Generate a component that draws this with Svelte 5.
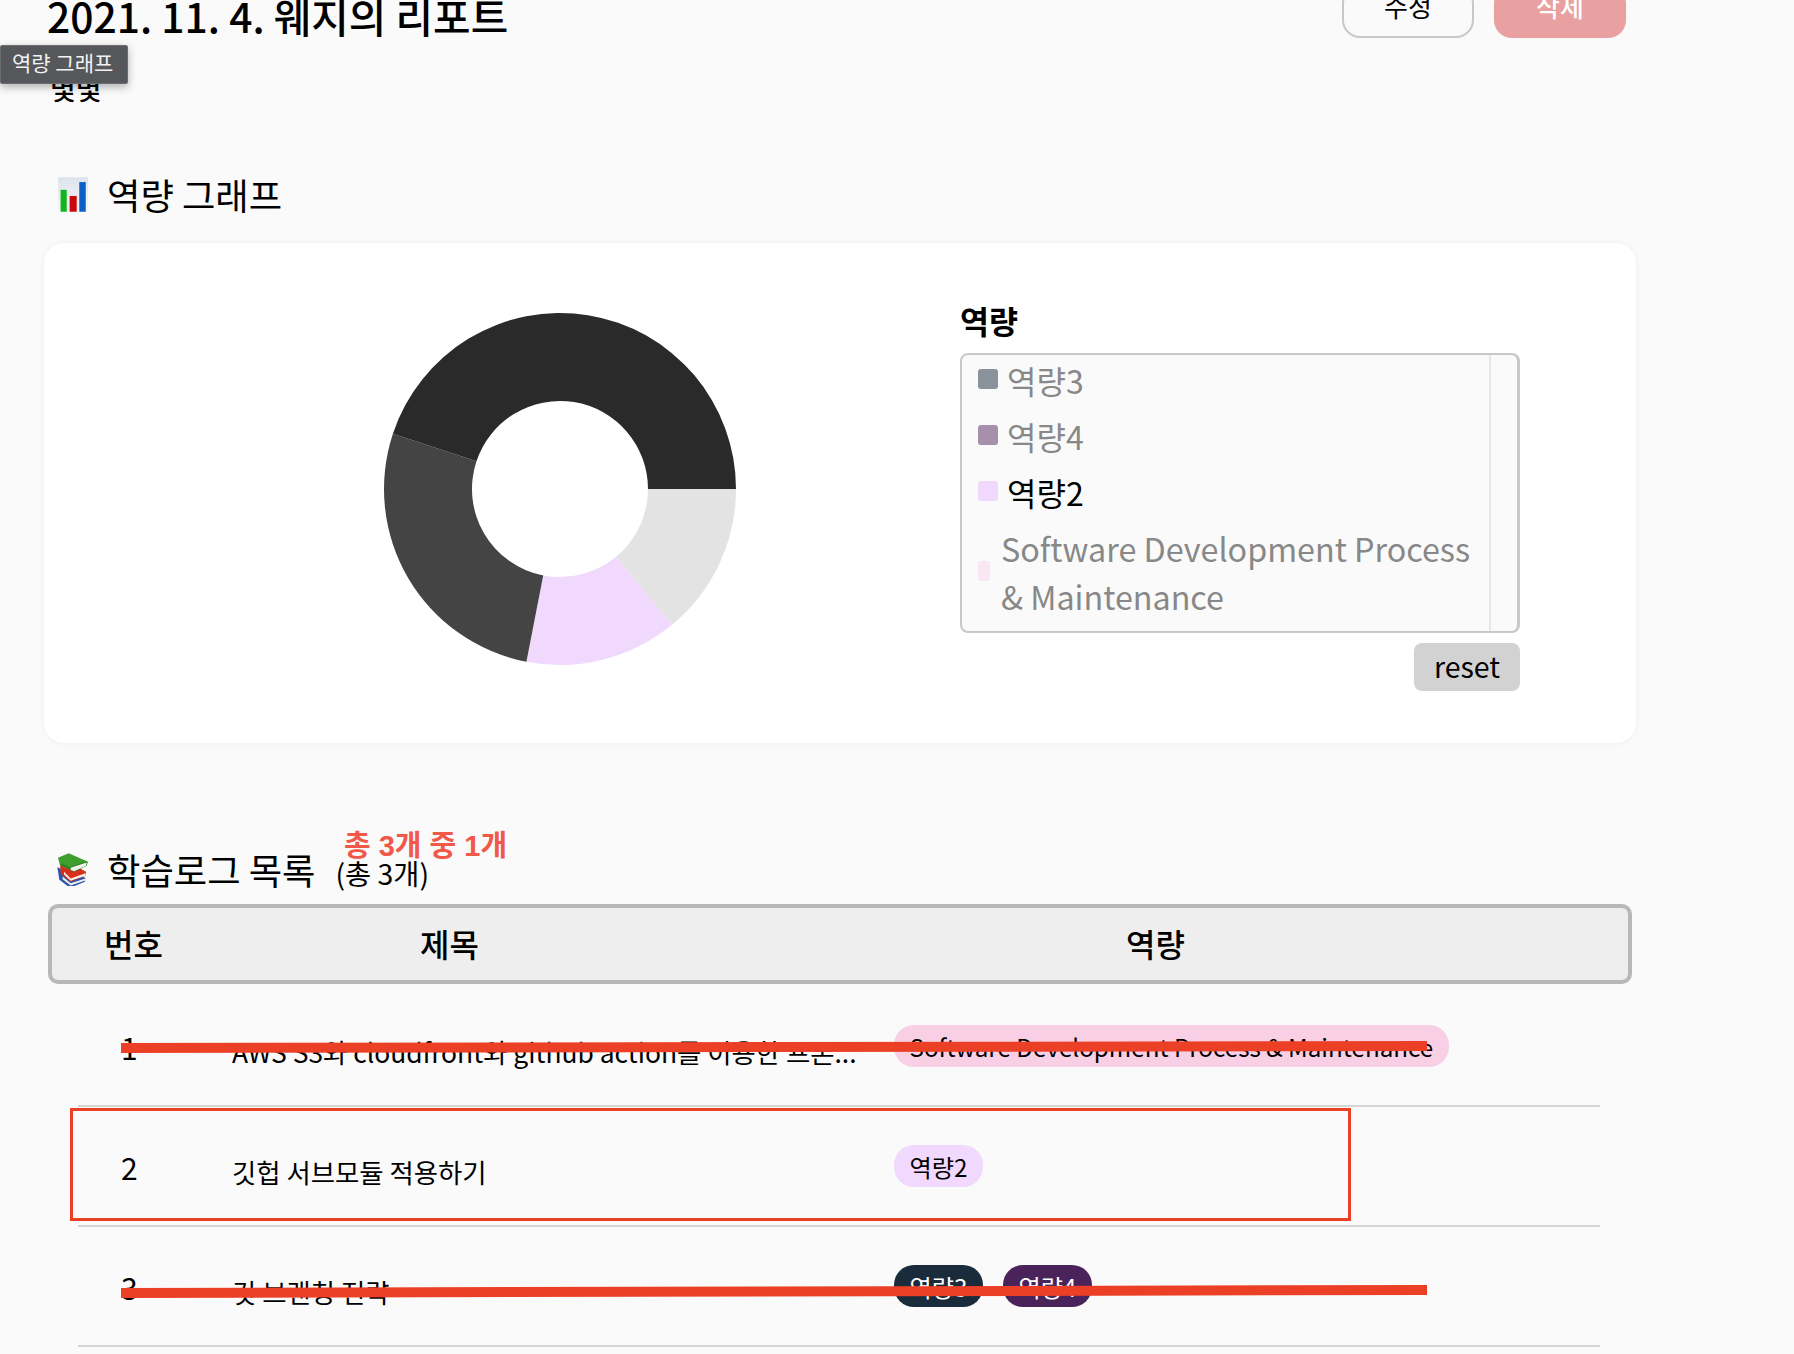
<script lang="ts">
  const R = 176, r = 88, cx = 180, cy = 180;

  function slicePath(from: number, to: number) {
    const p = (rad: number, deg: number) => {
      const a = (deg * Math.PI) / 180;
      return `${(cx + rad * Math.cos(a)).toFixed(2)} ${(cy + rad * Math.sin(a)).toFixed(2)}`;
    };
    const large = to - from > 180 ? 1 : 0;
    return `M${p(R, from)} A${R} ${R} 0 ${large} 1 ${p(R, to)} L${p(r, to)} A${r} ${r} 0 ${large} 0 ${p(r, from)} Z`;
  }

  const slices = [
    { from: 0, to: 50.4, color: '#e3e3e3' },
    { from: 50.4, to: 101, color: '#f0d9fc' },
    { from: 101, to: 198.3, color: '#444444' },
    { from: 198.3, to: 360, color: '#2a2a2a' },
  ];

  const legend = [
    { label: '역량3', color: '#8a929c', active: false },
    { label: '역량4', color: '#a58fab', active: false },
    { label: '역량2', color: '#f0d9fc', active: true },
    { label: 'Software Development Process & Maintenance', color: '#fbe7f3', active: false, long: true },
  ];

  const rows = [
    { no: 1, title: 'AWS S3와 cloudfront와 github action를 이용한 프론...', tags: [{ label: 'Software Development Process & Maintenance', cls: 'pink' }] },
    { no: 2, title: '깃헙 서브모듈 적용하기', tags: [{ label: '역량2', cls: 'lilac' }] },
    { no: 3, title: '깃 브랜칭 전략', tags: [{ label: '역량3', cls: 'navy' }, { label: '역량4', cls: 'plum' }] },
  ];
</script>

<main class="page">
  <header class="top">
    <h1>2021. 11. 4. 웨지의 리포트</h1>
    <div class="actions">
      <button class="btn edit">수정</button>
      <button class="btn del">삭제</button>
    </div>
  </header>
  <p class="desc">몇몇</p>

  <h2 class="section first">
    <svg class="emoji" viewBox="22 18 93 107">
      <defs>
        <linearGradient id="chartbg" x1="0" y1="0" x2="0" y2="1">
          <stop offset="0" stop-color="#dde4ec" />
          <stop offset="1" stop-color="#f5f7f9" />
        </linearGradient>
      </defs>
      <rect x="22" y="18" width="93" height="107" fill="url(#chartbg)" />
      <rect x="30" y="57" width="19" height="68" fill="#12b51c" />
      <rect x="58" y="76" width="22" height="49" fill="#c80a0a" />
      <rect x="88" y="33" width="20" height="92" fill="#0c5fc4" />
    </svg>
    역량 그래프
  </h2>

  <section class="card">
    <div class="chart">
      <svg width="360" height="360" viewBox="0 0 360 360">
        {#each slices as s}
          <path d={slicePath(s.from, s.to)} fill={s.color} />
        {/each}
      </svg>
    </div>
    <div class="filter">
      <h3>역량</h3>
      <div class="listbox">
        <ul>
          {#each legend as item}
            <li class:active={item.active} class:long={item.long}>
              <span class="swatch" style="background: {item.color}"></span>
              <span>{item.label}</span>
            </li>
          {/each}
        </ul>
        <div class="track"></div>
      </div>
      <button class="reset">reset</button>
    </div>
  </section>

  <h2 class="section second">
    <svg class="emoji book" viewBox="21 15 96 96">
      <polygon points="22,56 60,72 106,88 105,100 60,118 28,94" fill="#2f55ab" />
      <polygon points="38,84 62,104 106,90 106,96 62,111 38,92" fill="#efeee8" />
      <polygon points="30,44 52,38 108,70 106,82 62,100 32,76" fill="#d6301c" />
      <polygon points="42,70 62,90 106,74 106,82 62,97 42,78" fill="#f5f1e6" />
      <polygon points="24,28 56,14 114,40 110,50 72,70 30,50" fill="#3f9f2e" />
      <polygon points="34,44 60,56 72,52 110,38 112,42 110,52 72,70 60,64 34,50" fill="#2c7f20" />
      <polygon points="62,58 110,42 108,52 72,68 62,64" fill="#f4f4ee" />
    </svg>
    학습로그 목록
    <small>(총 3개)</small>
  </h2>

  <div class="thead">
    <span>번호</span>
    <span>제목</span>
    <span>역량</span>
  </div>

  {#each rows as row}
    <div class="row">
      <span class="num">{row.no}</span>
      <span class="title">{row.title}</span>
      <div class="tags">
        {#each row.tags as tag}
          <span class="tag {tag.cls}">{tag.label}</span>
        {/each}
      </div>
    </div>
  {/each}
</main>

<div class="tooltip">역량 그래프</div>
<div class="note">총 3개 중 1개</div>

<svg class="marks" width="1794" height="1354">
  <polygon points="121,1043 1427,1041 1427,1051 121,1053" fill="#ec4026" />
  <polygon points="121,1288 1427,1285 1427,1295 121,1298" fill="#ec4026" />
  <rect x="71.5" y="1109.5" width="1278" height="110" fill="none" stroke="#ec4026" stroke-width="3" />
</svg>

<style>
  :global(body) {
    margin: 0;
    height: 1354px;
    overflow: hidden;
    background: #fafafa;
    font-family: "Noto Sans CJK KR", "Noto Sans", sans-serif;
    color: #000;
  }

  .page {
    width: 1592px;
    margin: -13px 0 0 44px;
  }

  .top {
    display: flex;
    justify-content: space-between;
    align-items: flex-start;
    padding-right: 10px;
  }

  h1 {
    margin: 0 0 0 3px;
    font-size: 40.8px;
    font-weight: 500;
    line-height: 58px;
  }

  .actions {
    display: flex;
    gap: 20px;
    margin-top: -1px;
  }

  .btn {
    width: 132px;
    height: 52px;
    border-radius: 18px;
    font-family: inherit;
    font-size: 26px;
    padding: 0 0 12px;
    line-height: 1;
    box-sizing: border-box;
  }

  .edit {
    background: transparent;
    border: 2px solid #c8c8c8;
  }

  .del {
    background: #e8a0a0;
    border: 0;
    color: #fff;
    font-weight: 500;
  }

  .desc {
    margin: 25px 0 0 6px;
    font-size: 28px;
    line-height: 36px;
    font-weight: 500;
  }

  .section {
    display: flex;
    align-items: center;
    margin: 0;
    font-size: 36.3px;
    font-weight: 400;
    line-height: 52px;
  }

  .section.first {
    margin-top: 62px;
    margin-left: 14px;
  }

  .section.second {
    margin-top: 100px;
    margin-left: 13px;
  }

  .emoji {
    width: 30px;
    height: 35px;
    margin-right: 19px;
  }

  .emoji.book {
    width: 32px;
    height: 33px;
    margin-right: 18px;
  }

  .section small {
    font-size: 28.4px;
    line-height: 40px;
    margin: 7px 0 0 20px;
  }

  .card {
    display: flex;
    box-sizing: border-box;
    height: 500px;
    margin-top: 23px;
    background: #fff;
    border-radius: 20px;
    box-shadow: 0 0 6px rgba(0, 0, 0, 0.06);
  }

  .chart {
    width: 696px;
    padding: 66px 0 0 336px;
    box-sizing: border-box;
  }

  .filter {
    width: 560px;
    margin-left: 220px;
    padding-top: 56px;
    display: flex;
    flex-direction: column;
    align-items: flex-start;
  }

  h3 {
    margin: 0;
    font-size: 31.5px;
    font-weight: 700;
    line-height: 42px;
  }

  .listbox {
    display: flex;
    box-sizing: border-box;
    width: 560px;
    height: 280px;
    margin-top: 12px;
    background: #fafafa;
    border: 2px solid #c8c8c8;
    border-right-width: 3px;
    border-radius: 8px;
  }

  ul {
    flex: 1;
    list-style: none;
    margin: 0;
    padding: 0 0 0 16px;
  }

  li {
    display: flex;
    align-items: center;
    gap: 9px;
    min-height: 56px;
    font-size: 32px;
    line-height: 48px;
    color: #888;
  }

  li:first-child {
    margin-top: -3px;
  }

  li.active {
    color: #000;
  }

  li.long {
    padding-top: 4px;
    gap: 11px;
    font-size: 32.3px;
  }

  li.long span:last-child {
    width: 488px;
    flex-shrink: 0;
  }

  .swatch {
    flex: 0 1 20px;
    min-width: 12px;
    height: 20px;
    margin-bottom: 2px;
    border-radius: 3px;
  }

  .track {
    width: 26px;
    border-left: 2px solid #e8e8e8;
  }

  .reset {
    align-self: flex-end;
    width: 106px;
    height: 48px;
    margin-top: 10px;
    background: #d2d2d2;
    border: 0;
    border-radius: 8px;
    font-family: inherit;
    font-size: 28.5px;
    padding: 0 0 4px;
  }

  .thead {
    display: grid;
    grid-template-columns: 316px 706px 1fr;
    box-sizing: border-box;
    width: 1584px;
    height: 80px;
    margin: 9px 0 0 4px;
    padding: 0 0 2px 52px;
    align-items: center;
    background: #eee;
    border: 4px solid #b8b8b8;
    border-radius: 10px;
    font-size: 32px;
    font-weight: 500;
  }

  .row {
    display: grid;
    grid-template-columns: 110px 662px 1fr;
    align-items: center;
    box-sizing: border-box;
    height: 120px;
    width: 1522px;
    margin-left: 34px;
    padding: 2px 0 0 43px;
    border-bottom: 2px solid #d5d5d5;
  }

  .thead + .row {
    margin-top: 3px;
  }

  .num {
    font-size: 30px;
  }

  .title {
    font-size: 26.4px;
    padding-top: 8px;
    margin-left: 1px;
  }

  .tags {
    display: flex;
    gap: 20px;
    margin-top: -2px;
    margin-left: 1px;
  }

  .tag {
    height: 42px;
    padding: 0 15.5px;
    border-radius: 20px;
    font-size: 24.2px;
    line-height: 44px;
  }

  .pink { background: #f8cfe5; }
  .lilac { background: #f0d9fc; }
  .navy { background: #1a2b3c; color: #fff; }
  .plum { background: #4a235a; color: #fff; }

  .tooltip {
    position: absolute;
    left: 0;
    top: 45px;
    box-sizing: border-box;
    width: 128px;
    height: 39px;
    padding-left: 11px;
    background: #55575a;
    border: 1px solid #6a6c6f;
    border-radius: 2px;
    color: #f2f2f2;
    font-size: 21px;
    line-height: 32px;
    box-shadow: 0 3px 8px rgba(0, 0, 0, 0.3);
  }

  .note {
    position: absolute;
    left: 344px;
    top: 825px;
    color: #f0584a;
    font-family: "Liberation Sans", "Noto Sans CJK KR", sans-serif;
    font-size: 29px;
    font-weight: 700;
    line-height: 42px;
  }

  .marks {
    position: absolute;
    left: 0;
    top: 0;
    pointer-events: none;
  }
</style>
